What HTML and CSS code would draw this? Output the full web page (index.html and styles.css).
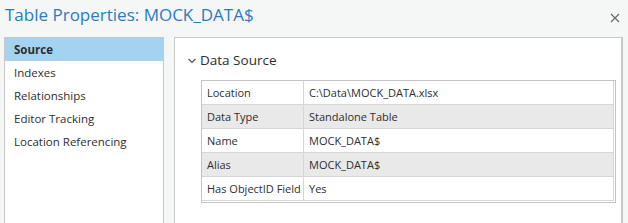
FILE: index.html
```html
<!DOCTYPE html>
<html>
<head>
    <meta charset="utf-8">
    <title>Table Properties</title>
    <link rel="stylesheet" href="styles.css">
</head>
<body>

<div class="dlg_head">
    <div class="dlg_title">Table Properties: MOCK_DATA$</div>
    <div class="dlg_close">
        <svg width="10" height="10" viewBox="0 0 10 10"><path d="M1 1L9 9M9 1L1 9" stroke="#6a6a6a" stroke-width="1.2" fill="none"/></svg>
    </div>
</div>

<div class="dlg_body">
    <div class="nav_box">
        <div class="nav_item active">Source</div>
        <div class="nav_item">Indexes</div>
        <div class="nav_item">Relationships</div>
        <div class="nav_item">Editor Tracking</div>
        <div class="nav_item">Location Referencing</div>
    </div>

    <div class="page_box">
        <div class="sec_title">
            <svg class="chev" width="8" height="6" viewBox="0 0 8 6"><path d="M0.5 1L4 4.5L7.5 1" stroke="#555" stroke-width="1.2" fill="none"/></svg>
            <span>Data Source</span>
        </div>
        <div class="grid_wrap">
            <table class="prop_table">
                <tr><td class="k">Location</td><td>C:\Data\MOCK_DATA.xlsx</td></tr>
                <tr class="alt"><td class="k">Data Type</td><td>Standalone Table</td></tr>
                <tr><td class="k">Name</td><td>MOCK_DATA$</td></tr>
                <tr class="alt"><td class="k">Alias</td><td>MOCK_DATA$</td></tr>
                <tr><td class="k">Has ObjectID Field</td><td>Yes</td></tr>
            </table>
        </div>
    </div>
</div>

</body>
</html>
```

FILE: styles.css
```css
html, body{
    margin:0;
    padding:0;
    height:100%;
    background:#f5f6f6;
    font-family:"Open Sans", "Noto Sans", sans-serif;
    color:#2e2e2e;
    overflow:hidden;
}
.dlg_head{
    height:37px;
    display:flex;
    justify-content:space-between;
}
.dlg_title{
    padding:2px 0 0 5px;
    font-size:17px;
    line-height:25px;
    color:#2b7bc1;
}
.dlg_close{
    padding:6px 8px 0 0;
}
.dlg_body{
    display:flex;
    gap:10px;
    padding:0 5px 0 4px;
    height:calc(100% - 37px);
}
.nav_box{
    width:158px;
    background:#fff;
    border:1px solid #c9c9c9;
    border-bottom:none;
}
.nav_item{
    height:23px;
    line-height:23px;
    padding-left:9px;
    font-size:11.5px;
}
.nav_item.active{
    background:#a4d3f2;
    font-weight:bold;
}
.page_box{
    flex:1;
    background:#fff;
    border:1px solid #c9c9c9;
    border-bottom:none;
    border-right-width:2px;
    padding:12px 5px 0 13px;
}
.sec_title{
    display:flex;
    align-items:center;
    gap:4px;
    font-size:13.5px;
    height:20px;
}
.chev{
    margin-top:1px;
}
.grid_wrap{
    margin:10px 0 0 13px;
    border:1px solid #c4c4c4;
    padding:0 1px 1px 0;
}
.prop_table{
    width:100%;
    border-collapse:collapse;
    font-size:11px;
}
.prop_table td{
    height:23px;
    padding:0 0 0 5px;
    border:1px solid #d6d6d6;
    border-top:none;
    border-left:none;
}
.prop_table td.k{
    width:96px;
}
.prop_table tr.alt td{
    background:#e9e9e9;
}
```
